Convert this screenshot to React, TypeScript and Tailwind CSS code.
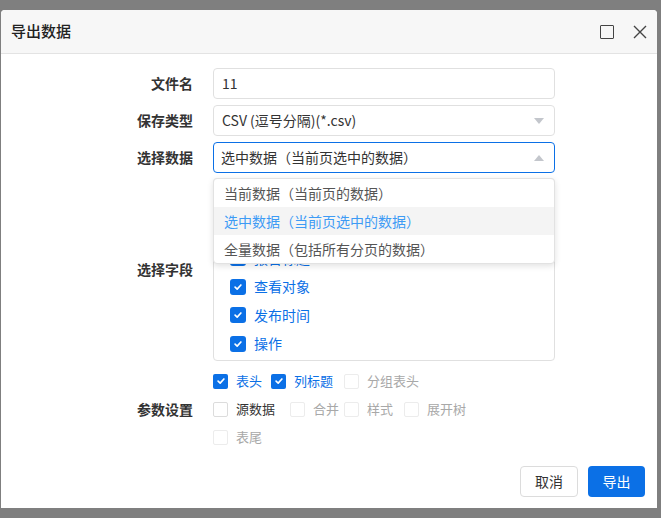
import React from "react";

const FONT = { fontFamily: '"Noto Sans CJK SC", "Noto Sans", sans-serif' };

function Check({ on, size = "sm", dim }: { on?: boolean; size?: "sm" | "lg"; dim?: boolean }) {
  const box = size === "lg" ? "h-4 w-4 rounded-[3px]" : "h-[15px] w-[15px] rounded-[2px]";
  if (on) {
    return (
      <span className={`flex shrink-0 items-center justify-center bg-[#0b70e6] ${box}`}>
        <svg viewBox="0 0 12 12" className="h-[10px] w-[10px]" fill="none" stroke="white" strokeWidth="2" strokeLinecap="round" strokeLinejoin="round">
          <path d="M2.5 6.2 5 8.5 9.5 3.6" />
        </svg>
      </span>
    );
  }
  return <span className={`shrink-0 border bg-white ${dim ? "border-[#ececec]" : "border-[#dcdcdc]"} ${box}`} />;
}

function Caret({ up }: { up?: boolean }) {
  return (
    <svg viewBox="0 0 10 6" className="h-[6px] w-[10px]" fill="#c3c6cc">
      {up ? <path d="M0 6 5 0 10 6Z" /> : <path d="M0 0 10 0 5 6Z" />}
    </svg>
  );
}

function Param({ label, on, dim, mr }: { label: string; on?: boolean; dim?: boolean; mr: string }) {
  return (
    <label className={`flex items-center gap-2 ${mr}`}>
      <Check on={on} dim={dim} />
      <span className={`text-[13px] ${on ? "text-[#0b70e6]" : dim ? "text-[#a8a8a8]" : "text-[#333]"}`}>{label}</span>
    </label>
  );
}

export default function App() {
  const fields = ["标题", "发布单位", "报告标题", "查看对象", "发布时间", "操作"];
  return (
    <div className="h-[518px] w-[661px] bg-[#7f7f7f] pl-px pt-[10px]" style={FONT}>
      <div className="relative flex h-[498px] w-[656px] flex-col overflow-hidden rounded-t-[4px] bg-white">
        <header className="flex h-[44px] items-center justify-between border-b border-[#e3e3e3] bg-[#f7f7f7] pl-[10px] pr-[10px]">
          <h1 className="text-[15px] font-medium text-[#222]">导出数据</h1>
          <div className="flex items-center gap-[19px]">
            <span className="h-[14px] w-[14px] rounded-[1px] border-[1.5px] border-[#444]" />
            <svg viewBox="0 0 14 14" className="h-[14px] w-[14px]" stroke="#444" strokeWidth="1.4">
              <path d="M1 1 13 13M13 1 1 13" />
            </svg>
          </div>
        </header>

        <div className="flex flex-1 flex-col pt-[14px]">
          <div className="grid grid-cols-[192px_342px] gap-x-5 gap-y-[6px]">
            <span className="self-center text-right text-[14px] font-bold text-[#333]">文件名</span>
            <div className="flex h-[31px] items-center rounded-[4px] border border-[#e0e0e0] px-[8px] text-[14px] text-[#333]">11</div>

            <span className="self-center text-right text-[14px] font-bold text-[#333]">保存类型</span>
            <div className="flex h-[31px] items-center justify-between rounded-[4px] border border-[#e0e0e0] pl-[8px] pr-[10px] text-[14px] text-[#333]">
              <span>CSV (逗号分隔)(*.csv)</span>
              <Caret />
            </div>

            <span className="self-center text-right text-[14px] font-bold text-[#333]">选择数据</span>
            <div className="flex h-[31px] items-center justify-between rounded-[4px] border border-[#0b70e6] pl-[7px] pr-[10px] text-[14px] text-[#333]">
              <span>选中数据（当前页选中的数据）</span>
              <Caret up />
            </div>
          </div>

          <div className="mt-[5px] grid grid-cols-[192px_342px] gap-x-5">
            <span className="self-center text-right text-[14px] font-bold text-[#333]">选择字段</span>
            <div className="flex h-[183px] flex-col justify-end overflow-hidden rounded-[4px] border border-[#e0e0e0] pb-[2px] pl-4">
              {fields.map((f) => (
                <div key={f} className="flex h-[28.5px] shrink-0 items-center gap-2">
                  <Check on size="lg" />
                  <span className="text-[14px] text-[#0b70e6]">{f}</span>
                </div>
              ))}
            </div>
          </div>

          <div className="mt-[6px] grid grid-cols-[192px_342px] gap-x-5">
            <span className="self-center text-right text-[14px] font-bold text-[#333]">参数设置</span>
            <div className="flex flex-col">
              <div className="flex h-[28px] items-center">
                <Param label="表头" on mr="mr-[9px]" />
                <Param label="列标题" on mr="mr-[11px]" />
                <Param label="分组表头" dim mr="" />
              </div>
              <div className="flex h-[28px] items-center">
                <Param label="源数据" mr="mr-[15px]" />
                <Param label="合并" dim mr="mr-[5px]" />
                <Param label="样式" dim mr="mr-[11px]" />
                <Param label="展开树" dim mr="" />
              </div>
              <div className="flex h-[28px] items-center">
                <Param label="表尾" dim mr="" />
              </div>
            </div>
          </div>

          <div className="mt-auto flex justify-end gap-[10px] pb-[11px] pr-[12px]">
            <button className="h-[31px] w-[58px] rounded-[4px] border border-[#dcdcdc] bg-white text-[14px] text-[#333]">取消</button>
            <button className="h-[31px] w-[57px] rounded-[4px] bg-[#0b70e6] text-[14px] text-white">导出</button>
          </div>
        </div>

        <ul className="absolute left-[212px] top-[168px] w-[342px] rounded-[4px] border border-[#e2e2e2] bg-white shadow-[0_2px_6px_rgba(0,0,0,0.12)]">
          <li className="flex h-[28px] items-center pl-[10px] text-[14px] text-[#555]">当前数据（当前页的数据）</li>
          <li className="flex h-[28px] items-center bg-[#f4f4f4] pl-[10px] text-[14px] text-[#3d9bf5]">选中数据（当前页选中的数据）</li>
          <li className="flex h-[28px] items-center pl-[10px] text-[14px] text-[#555]">全量数据（包括所有分页的数据）</li>
        </ul>
      </div>
    </div>
  );
}
